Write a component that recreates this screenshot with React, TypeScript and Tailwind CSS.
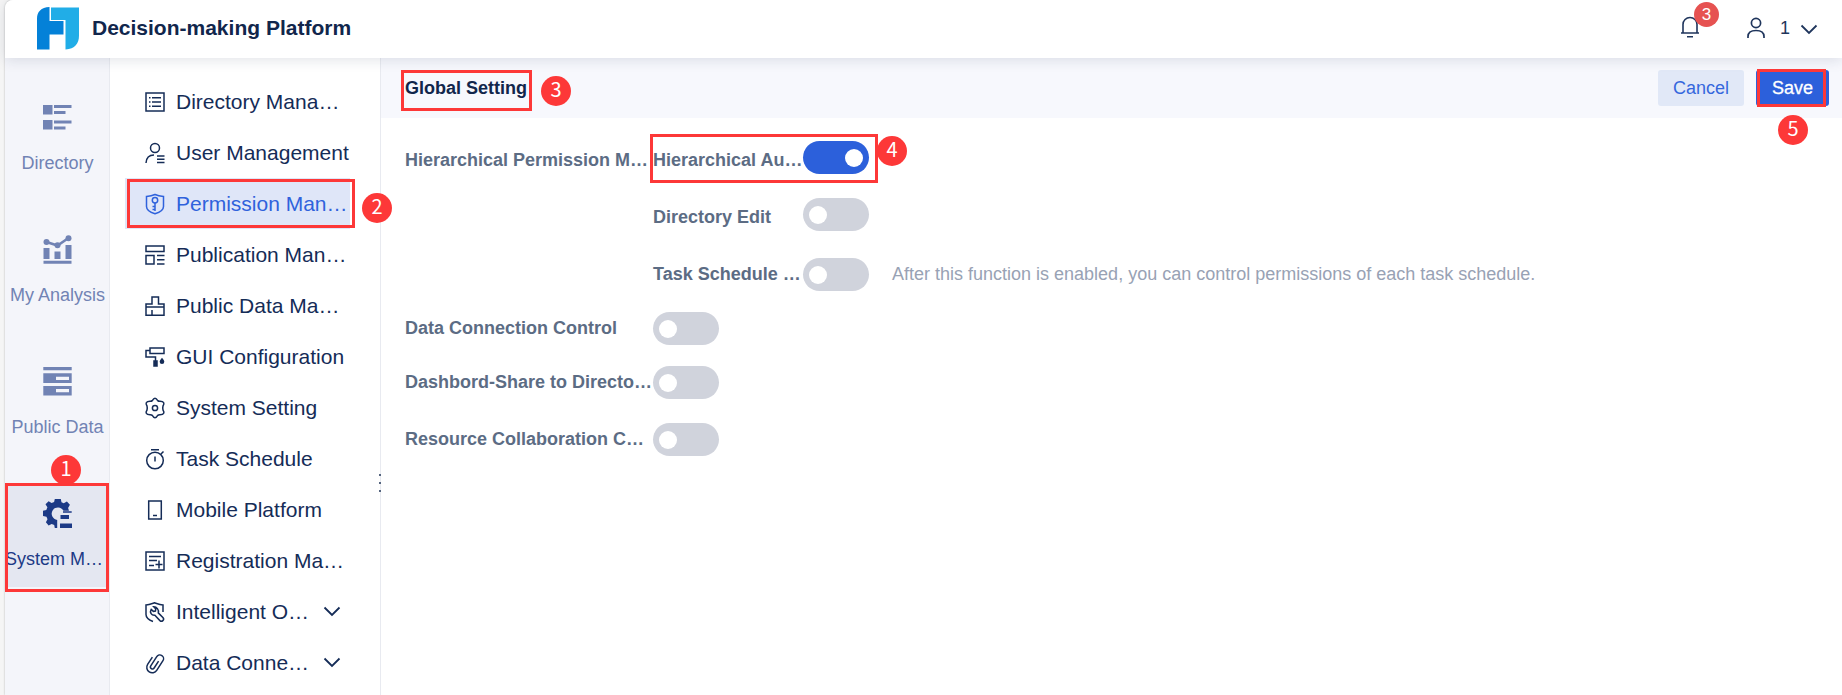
import type { ReactNode } from "react";

const menuIcons: Record<string, ReactNode> = {
  directory: (
    <>
      <rect x="1" y="1" width="18" height="18" />
      <path d="M4 5.8h1.5M7 5.8h9M4 10h1.5M7 10h9M4 14.2h1.5M7 14.2h9" />
    </>
  ),
  user: (
    <>
      <circle cx="10" cy="5" r="4.5" />
      <path d="M1 20c.3-5 3-8 8-8M12 13h7.5M12 16.2h7.5M12 19.4h7.5" />
    </>
  ),
  permission: (
    <>
      <path d="M10 .5c3 1.4 6 1.8 8.5 2v10c0 4-4 5.900-8.500 7.300C5.500 18.400 1.500 16.500 1.500 12.500v-10c2.500-.2 5.500-.6 8.500-2z" />
      <circle cx="10" cy="6.300" r="2.700" />
      <path d="M10 9v8M10 12.500H7.500M10 15.500H7.500" />
    </>
  ),
  publication: (
    <>
      <rect x="1" y="1" width="18" height="5.500" />
      <rect x="1" y="10.500" width="8" height="8.500" />
      <path d="M12 10.500h7.500M12 14.700h7.500M12 19h7.500" />
    </>
  ),
  publicData: <path d="M1 8h6V1h6.500v7H19v11.200H1zM1 11h18M7 14v5" />,
  gui: (
    <>
      <rect x="5" y="1" width="14" height="5.500" />
      <path d="M5 3.500H1v6.500h9.500v4" />
      <path d="M8.500 13.500h4v6h-4z" fill="currentColor" strokeWidth="0.500" />
      <path d="M17 10.800c1.500 2 2.300 2.800 2.300 4a2.300 2.300 0 0 1-4.600 0c0-1.200.8-2 2.300-4z" fill="currentColor" stroke="none" />
    </>
  ),
  setting: (
    <>
      <path d="M7.300 2.600Q10-2.200 12.700 2.600Q13.500 3.400 15 3.300Q20.800 3.500 18 8Q17.500 10 18 12Q20.800 16.500 15 16.700Q13.500 16.600 12.700 17.400Q10 22.200 7.300 17.400Q6.500 16.600 5 16.700Q-.8 16.500 2 12Q2.500 10 2 8Q-.8 3.500 5 3.300Q6.500 3.400 7.300 2.600z" />
      <circle cx="10" cy="10" r="2.600" />
    </>
  ),
  task: (
    <>
      <circle cx="10" cy="11.500" r="8.300" />
      <path d="M6 .8h8M10 7.500v5M16 5l2.500-2.500" />
    </>
  ),
  mobile: (
    <>
      <rect x="3.700" y="1" width="12.600" height="18" />
      <path d="M8 15.500h4" />
    </>
  ),
  registration: (
    <>
      <rect x="1" y="1" width="18" height="18" />
      <path d="M4 5.500h12M4 9.500h8M4 14.500h5M14 9.500v8M10.500 13.500h7" />
    </>
  ),
  intelligent: (
    <>
      <path d="M18 10V3C15 2.800 12.500 1.800 9.500.800 6.500 1.800 4 2.800 1 3v9.500c0 3.500 3 5.500 7 7" />
      <path d="M8.800 4.800l2 2.200-.4 2-2 .4L6.200 7.400c-1.800 3 .3 6.200 3.700 5.800l5 5.400c2 1.700 4.800-.8 3.200-2.900l-4.800-4.800c.8-3.300-1.600-6-4.500-6.100z" />
    </>
  ),
  connection: (
    <path
      transform="rotate(33 10 10)"
      d="M12 6.500v8.200a2 2 0 0 1-4 0V3.700a3.700 3.700 0 0 1 7.400 0v11.500a5.400 5.400 0 0 1-10.800 0V6.500"
    />
  ),
};

const menu = [
  { icon: "directory", label: "Directory Mana…" },
  { icon: "user", label: "User Management" },
  { icon: "permission", label: "Permission Man…", active: true },
  { icon: "publication", label: "Publication Man…" },
  { icon: "publicData", label: "Public Data Ma…" },
  { icon: "gui", label: "GUI Configuration" },
  { icon: "setting", label: "System Setting" },
  { icon: "task", label: "Task Schedule" },
  { icon: "mobile", label: "Mobile Platform" },
  { icon: "registration", label: "Registration Ma…" },
  { icon: "intelligent", label: "Intelligent O…", expandable: true },
  { icon: "connection", label: "Data Conne…", expandable: true },
];

const navItems = [
  {
    label: "Directory",
    icon: <path d="M0 2h9.500v9.500H0zM11 2h17.500v3H11zM11 8h11.500v3H11zM0 17h9.500v9.500H0zM11 17.500h17.500v3H11zM11 23.500h11.500v3H11z" />,
  },
  {
    label: "My Analysis",
    icon: (
      <>
        <path d="M.5 13h6v11h-6zM11.500 16.500h6V24h-6zM22.500 10h6v14h-6zM.5 25.700h28v3H.5z" />
        <path d="M3.500 7l11 3.500 11-7.500" fill="none" stroke="currentColor" strokeWidth="2.500" />
        <circle cx="3.500" cy="7" r="3" />
        <circle cx="14.500" cy="10.200" r="3" />
        <circle cx="25.500" cy="3.300" r="3" />
      </>
    ),
  },
  {
    label: "Public Data",
    icon: <path fillRule="evenodd" d="M.3 0h28.400v3.300H.3zM.3 6.300h28.400V16H.3zM13 9.700v3.200h13V9.700zM.3 19h28.400v9.500H.3zM13 22v3.200h13V22z" />,
  },
  {
    label: "System M…",
    active: true,
    icon: (
      <>
        <path d="M11.800 0h6l.7 3.300 2.200 1 3.200-1.800 3 3.300-1.800 3.200.9 2.700h-5.500a6.300 6.300 0 1 0-6.300 9.300v8h-2.400l-.6-3.100-2.500-1-3.100 1.600-2.700-3.300 1.600-3-1-2.500L0 16.900v-5.200L3.300 11l1.100-2.700-1.900-3L5.600 2.300l3 1.800 2.500-1z" />
        <path d="M20 12.300h8.700v1.500H20zM17.500 16h8.500v4h-8.500zM17 24.500h12V29H17z" />
      </>
    ),
  },
];

function Chevron() {
  return (
    <svg width="18" height="11" viewBox="0 0 18 11" fill="none" stroke="currentColor" strokeWidth="1.800">
      <path d="M1.500 1.500 9 9l7.500-7.500" />
    </svg>
  );
}

function Toggle({ on = false }: { on?: boolean }) {
  return on ? (
    <div className="flex h-[33px] w-[66px] shrink-0 items-center justify-end rounded-full bg-[#2c60db] px-1.5">
      <div className="size-[18px] rounded-full bg-white" />
    </div>
  ) : (
    <div className="flex h-[33px] w-[66px] shrink-0 items-center rounded-full bg-[#d0d3dc] px-1.5">
      <div className="size-[18px] rounded-full bg-white" />
    </div>
  );
}

function Marker({ n, className }: { n: number; className: string }) {
  return (
    <div
      className={`absolute z-20 flex size-[30px] items-center justify-center rounded-full bg-[#fd3838] font-['Noto_Sans_CJK_SC',sans-serif] text-[20px] leading-none text-white ${className}`}
    >
      <span className="-mt-1">{n}</span>
    </div>
  );
}

function Frame({ className }: { className: string }) {
  return <div className={`pointer-events-none absolute z-10 border-3 border-[#fd3838] ${className}`} />;
}

function Header() {
  return (
    <header className="relative z-[5] flex h-[58px] shrink-0 items-center rounded-tl-lg bg-white shadow-[0_2px_14px_rgba(20,35,70,0.13)]">
      <svg className="mt-[-1px] ml-8" width="42" height="43" viewBox="0 0 42 43">
        <path d="M12.500 0v14h14v13.500h-14V42.500H0V12C0 4.500 4 .5 12.500 0z" fill="#0481d8" />
        <path d="M14 .5h28v28c0 8-4 13.500-13.500 14V13H14z" fill="#21ade7" />
      </svg>
      <h1 className="-mt-0.5 ml-[13px] text-[21px] leading-7 font-bold text-[#11264c]">Decision-making Platform</h1>
      <div className="ml-auto flex items-center pr-6 text-[#1f355c]">
        <div className="relative -mt-1 mr-[47px]">
          <svg width="20" height="22" viewBox="0 0 20 22" fill="none" stroke="currentColor" strokeWidth="1.600">
            <path d="M1 17h18M3 17V8.500a7 7 0 0 1 14 0V17M7 20.800h6" />
          </svg>
          <div className="absolute -top-3.5 left-3.5 flex size-[25px] items-center justify-center rounded-full bg-[#e65251] text-[17px] leading-none text-white">
            3
          </div>
        </div>
        <svg className="-mt-0.5" width="18" height="22" viewBox="0 0 18 22" fill="none" stroke="currentColor" strokeWidth="1.700">
          <circle cx="9" cy="6" r="4.600" />
          <path d="M1 21v-1.500C1 15.500 4 13.500 9 13.500s8 2 8 6V21" />
        </svg>
        <span className="-mt-0.5 mr-2.5 ml-[15px] text-lg leading-6">1</span>
        <Chevron />
      </div>
    </header>
  );
}

function SideNav() {
  return (
    <nav className="flex w-[105px] shrink-0 flex-col gap-[30px] border-r border-[#e8eaf0] bg-[#f4f5fa] pt-[31px]">
      {navItems.map((item) => (
        <div
          key={item.label}
          className={
            item.active
              ? "relative flex h-[102px] flex-col items-center bg-[#e4e7f1] pt-[14px] text-[#1c3a86]"
              : "relative flex h-[102px] flex-col items-center pt-[14px] pl-px text-[#7183b4]"
          }
        >
          <svg className="shrink-0" width="29" height="29" viewBox="0 0 29 29" fill="currentColor">
            {item.icon}
          </svg>
          <span className={item.active ? "mt-[19px] -ml-[6px] text-lg leading-6 whitespace-nowrap" : "mt-[19px] text-lg leading-6 whitespace-nowrap"}>
            {item.label}
          </span>
          {item.active && (
            <>
              <Frame className="-top-0.5 left-0 h-[109px] w-[104px]" />
              <Marker n={1} className="-top-[30px] left-[46px]" />
            </>
          )}
        </div>
      ))}
    </nav>
  );
}

function Menu() {
  return (
    <aside className="relative w-[271px] shrink-0 border-r border-[#e8eaf0] pt-[18px] pl-[15px]">
      {menu.map((item) => (
        <div
          key={item.label}
          className={
            item.active
              ? "relative flex h-[51px] w-[225px] items-center bg-[#dfe6f8] pl-5 text-[#2f62dc]"
              : "relative flex h-[51px] w-[225px] items-center pl-5 text-[#152c57]"
          }
        >
          <svg className="overflow-visible" width="20" height="20" viewBox="0 0 20 20" fill="none" stroke="currentColor" strokeWidth="1.500">
            {menuIcons[item.icon]}
          </svg>
          <span className="ml-[11px] text-[21px] leading-7 whitespace-nowrap">{item.label}</span>
          {item.expandable && (
            <span className="mr-[9px] ml-auto">
              <Chevron />
            </span>
          )}
          {item.active && (
            <>
              <Frame className="top-px left-0.5 h-[49px] w-[228px]" />
              <Marker n={2} className="top-[15px] left-[237px]" />
            </>
          )}
        </div>
      ))}
      <div className="absolute top-[416px] -right-px flex flex-col gap-[6px]">
        <i className="size-0.5 bg-[#55657f]" />
        <i className="size-0.5 bg-[#55657f]" />
        <i className="size-0.5 bg-[#55657f]" />
      </div>
    </aside>
  );
}

function Settings() {
  return (
    <main className="min-w-0 flex-1">
      <div className="flex h-[60px] items-center justify-between bg-[#f7f8fd] pr-[13px] pl-6">
        <div className="relative">
          <h2 className="text-lg leading-6 font-bold text-[#11264c]">Global Setting</h2>
          <Frame className="-top-1.5 -left-1 h-[41px] w-[131px]" />
          <Marker n={3} className="top-0 left-[136px]" />
        </div>
        <div className="flex gap-3 text-lg">
          <button className="h-9 w-[86px] rounded-[3px] bg-[#e1e8f7] text-[#3567dd]">Cancel</button>
          <div className="relative">
            <button className="h-9 w-[73px] rounded-[3px] bg-[#2c60db] text-white [-webkit-text-stroke:0.3px_white]">Save</button>
            <Frame className="-top-px left-px h-[38px] w-[69px]" />
            <Marker n={5} className="top-[45px] left-[22px]" />
          </div>
        </div>
      </div>
      <div className="pt-[23px] pl-6 text-lg leading-6 font-bold whitespace-nowrap text-[#5c6c84]">
        <div className="flex">
          <span className="mt-[7px] w-[248px] shrink-0">Hierarchical Permission M…</span>
          <div className="flex flex-col">
            <div className="relative flex h-[57px]">
              <span className="mt-[7px] w-[150px]">Hierarchical Au…</span>
              <Toggle on />
              <Frame className="-top-[7px] -left-[3px] h-[49px] w-[228px]" />
              <Marker n={4} className="-top-[5px] left-[224px] font-normal" />
            </div>
            <div className="flex h-[60px]">
              <span className="mt-[7px] w-[150px]">Directory Edit</span>
              <Toggle />
            </div>
            <div className="flex h-[54px]">
              <span className="mt-1 w-[150px]">Task Schedule …</span>
              <Toggle />
              <span className="mt-1 ml-[23px] font-normal text-[#98a2b4]">
                After this function is enabled, you can control permissions of each task schedule.
              </span>
            </div>
          </div>
        </div>
        <div className="flex h-[54px]">
          <span className="mt-1 w-[248px]">Data Connection Control</span>
          <Toggle />
        </div>
        <div className="flex h-[57px]">
          <span className="mt-1 w-[248px]">Dashbord-Share to Directo…</span>
          <Toggle />
        </div>
        <div className="flex">
          <span className="mt-1 w-[248px]">Resource Collaboration C…</span>
          <Toggle />
        </div>
      </div>
    </main>
  );
}

export default function App() {
  return (
    <div className="h-[695px] w-[1842px] overflow-hidden bg-[#f5f5f5] pl-[5px] font-['Liberation_Sans',Arial,sans-serif]">
      <div className="flex h-full flex-col rounded-tl-lg bg-white shadow-[0_0_2px_rgba(0,0,0,0.3)]">
        <Header />
        <div className="flex min-h-0 flex-1">
          <SideNav />
          <Menu />
          <Settings />
        </div>
      </div>
    </div>
  );
}
